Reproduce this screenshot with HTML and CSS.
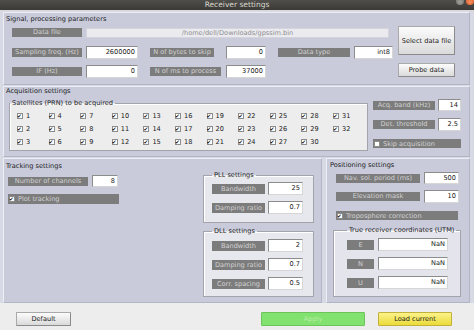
FILE: index.html
```html
<!DOCTYPE html>
<html>
<head>
<meta charset="utf-8">
<title>Receiver settings</title>
<link rel="stylesheet" href="styles.css">
</head>
<body>
<div class="win">
  <header class="titlebar">
    <span class="title">Receiver settings</span>
    <span class="wbtn wmin"></span>
    <span class="wbtn wclose"></span>
  </header>

  <main class="content">
    <section class="panel signal">
      <h2 class="ptitle">Signal, processing parameters</h2>
      <div class="sig-body">
        <div class="sig-rows">
          <div class="row r-file">
            <span class="lbl w70 h9">Data file</span>
            <span class="path">/home/dell/Downloads/gpssim.bin</span>
          </div>
          <div class="row r-sig">
            <span class="lbl w70">Sampling freq. (Hz)</span>
            <span class="inp w52 ml4">2600000</span>
            <span class="lbl w64 ml12">N of bytes to skip</span>
            <span class="inp w40 ml12">0</span>
            <span class="lbl w72 ml12">Data type</span>
            <span class="inp w39 ml4">int8</span>
          </div>
          <div class="row r-sig r-if">
            <span class="lbl w70">IF (Hz)</span>
            <span class="inp w52 ml4">0</span>
            <span class="lbl w71 ml12">N of ms to process</span>
            <span class="inp w40 ml5">37000</span>
          </div>
        </div>
        <div class="sig-btns">
          <button class="btn btn-select">Select data file</button>
          <button class="btn btn-probe">Probe data</button>
        </div>
      </div>
    </section>

    <section class="panel acq">
      <h2 class="ptitle">Acquisition settings</h2>
      <div class="acq-body">
        <fieldset class="group sats">
          <legend>Satellites (PRN) to be acquired</legend>
          <div class="sat-grid">
            <label class="chk"><span class="cb on"></span>1</label>
            <label class="chk"><span class="cb on"></span>2</label>
            <label class="chk"><span class="cb on"></span>3</label>
            <label class="chk"><span class="cb on"></span>4</label>
            <label class="chk"><span class="cb on"></span>5</label>
            <label class="chk"><span class="cb on"></span>6</label>
            <label class="chk"><span class="cb on"></span>7</label>
            <label class="chk"><span class="cb on"></span>8</label>
            <label class="chk"><span class="cb on"></span>9</label>
            <label class="chk"><span class="cb on"></span>10</label>
            <label class="chk"><span class="cb on"></span>11</label>
            <label class="chk"><span class="cb on"></span>12</label>
            <label class="chk"><span class="cb on"></span>13</label>
            <label class="chk"><span class="cb on"></span>14</label>
            <label class="chk"><span class="cb on"></span>15</label>
            <label class="chk"><span class="cb on"></span>16</label>
            <label class="chk"><span class="cb on"></span>17</label>
            <label class="chk"><span class="cb on"></span>18</label>
            <label class="chk"><span class="cb on"></span>19</label>
            <label class="chk"><span class="cb on"></span>20</label>
            <label class="chk"><span class="cb on"></span>21</label>
            <label class="chk"><span class="cb on"></span>22</label>
            <label class="chk"><span class="cb on"></span>23</label>
            <label class="chk"><span class="cb on"></span>24</label>
            <label class="chk"><span class="cb on"></span>25</label>
            <label class="chk"><span class="cb on"></span>26</label>
            <label class="chk"><span class="cb on"></span>27</label>
            <label class="chk"><span class="cb on"></span>28</label>
            <label class="chk"><span class="cb on"></span>29</label>
            <label class="chk"><span class="cb on"></span>30</label>
            <label class="chk"><span class="cb on"></span>31</label>
            <label class="chk"><span class="cb on"></span>32</label>
          </div>
        </fieldset>
        <div class="acq-side">
          <div class="row r-acq">
            <span class="lbl w62">Acq. band (kHz)</span>
            <span class="inp w23 ml3">14</span>
          </div>
          <div class="row r-acq r-det">
            <span class="lbl w62">Det. threshold</span>
            <span class="inp w23 ml3">2.5</span>
          </div>
          <label class="cbar skip"><span class="cb"></span>Skip acquisition</label>
        </div>
      </div>
    </section>

    <div class="lower">
      <section class="panel track">
        <h2 class="ptitle">Tracking settings</h2>
        <div class="track-body">
          <div class="track-left">
            <div class="row r-chan">
              <span class="lbl w80">Number of channels</span>
              <span class="inp w26 ml4">8</span>
            </div>
            <label class="cbar plot"><span class="cb on"></span>Plot tracking</label>
          </div>
          <div class="track-right">
            <fieldset class="group loop pll">
              <legend>PLL settings</legend>
              <div class="row r-loop">
                <span class="lbl w53 h10">Bandwidth</span>
                <span class="inp w35 ml3">25</span>
              </div>
              <div class="row r-loop">
                <span class="lbl w53 h10">Damping ratio</span>
                <span class="inp w35 ml3">0.7</span>
              </div>
            </fieldset>
            <fieldset class="group loop dll">
              <legend>DLL settings</legend>
              <div class="row r-loop">
                <span class="lbl w53 h10">Bandwidth</span>
                <span class="inp w35 ml3">2</span>
              </div>
              <div class="row r-loop">
                <span class="lbl w53 h10">Damping ratio</span>
                <span class="inp w35 ml3">0.7</span>
              </div>
              <div class="row r-loop">
                <span class="lbl w53 h10">Corr. spacing</span>
                <span class="inp w35 ml3">0.5</span>
              </div>
            </fieldset>
          </div>
        </div>
      </section>

      <section class="panel pos">
        <h2 class="ptitle">Positioning settings</h2>
        <div class="row r-pos">
          <span class="lbl w84">Nav. sol. period (ms)</span>
          <span class="inp w35 ml4">500</span>
        </div>
        <div class="row r-pos r-elev">
          <span class="lbl w84">Elevation mask</span>
          <span class="inp w35 ml4">10</span>
        </div>
        <label class="cbar tropo"><span class="cb on"></span>Troposphere correction</label>
        <fieldset class="group utm">
          <legend>True receiver coordinates (UTM)</legend>
          <div class="row r-utm">
            <span class="lbl w27 h10">E</span>
            <span class="inp w70 ml4">NaN</span>
          </div>
          <div class="row r-utm">
            <span class="lbl w27 h10">N</span>
            <span class="inp w70 ml4">NaN</span>
          </div>
          <div class="row r-utm">
            <span class="lbl w27 h10">U</span>
            <span class="inp w70 ml4">NaN</span>
          </div>
        </fieldset>
      </section>
    </div>
  </main>

  <footer class="footer">
    <button class="btn btn-default">Default</button>
    <button class="btn btn-apply">Apply</button>
    <button class="btn btn-load">Load current</button>
  </footer>
</div>
</body>
</html>
```

FILE: styles.css
```css
* { box-sizing: border-box; margin: 0; padding: 0; }

html, body { width: 474px; height: 330px; overflow: hidden; }

body {
  font-family: "DejaVu Sans", "Liberation Sans", sans-serif;
  font-size: 6.6px;
  line-height: 8px;
  color: #1e1e1e;
  background: #ececec;
}

.win { display: flex; flex-direction: column; height: 330px; }

/* ---------- title bar ---------- */
.titlebar {
  position: relative;
  height: 11px;
  background: linear-gradient(#4f4e4a, #3b3a36);
  border-bottom: 1px solid #d9d9d9;
  display: flex;
  justify-content: center;
  align-items: flex-start;
}
.title {
  font-size: 7.5px;
  line-height: 9px;
  color: #d8d5cc;
}
.wbtn {
  position: absolute;
  top: -3px;
  width: 8px;
  height: 8px;
  border-radius: 50%;
}
.wmin { left: 456px; background: radial-gradient(circle at 50% 60%, #a3a29d, #6a6964); }
.wclose { left: 466px; background: radial-gradient(circle at 50% 60%, #f7955f, #d9491f); }

/* ---------- content ---------- */
.content {
  flex: 1;
  background: #d7d9e4;
  padding: 1px 4px 0 3px;
  display: flex;
  flex-direction: column;
  gap: 1px;
}

.panel {
  background: #c9cbdb;
  border: 1px solid #eceef4;
  border-right-color: #b3b5c6;
  border-bottom-color: #b3b5c6;
}

.ptitle {
  font-size: 6.6px;
  font-weight: normal;
  line-height: 8px;
  color: #1c1c1c;
  padding-left: 2px;
}

.row { display: flex; align-items: center; }

/* gray labels */
.lbl {
  display: block;
  height: 9px;
  line-height: 9px;
  background: #7c7c7c;
  color: #d2d2d2;
  text-align: center;
  white-space: nowrap;
  overflow: hidden;
}
.h9 { height: 9px; line-height: 9px; }
.h10 { height: 10px; line-height: 10px; }

/* edit fields */
.inp {
  display: block;
  height: 13px;
  line-height: 11px;
  background: #ffffff;
  border: 1px solid;
  border-color: #8c8c8c #d6d6d6 #d6d6d6 #8c8c8c;
  text-align: right;
  padding-right: 2px;
  color: #202020;
  white-space: nowrap;
}

/* widths / spacing */
.w23 { width: 23px; } .w26 { width: 26px; } .w27 { width: 27px; }
.w35 { width: 35px; } .w39 { width: 39px; } .w40 { width: 40px; }
.w52 { width: 52px; } .w53 { width: 53px; } .w62 { width: 62px; }
.w64 { width: 64px; } .w70 { width: 70px; } .w71 { width: 71px; }
.w72 { width: 72px; } .w80 { width: 80px; } .w84 { width: 84px; }
.ml3 { margin-left: 3px; } .ml4 { margin-left: 4px; } .ml5 { margin-left: 5px; }
.ml12 { margin-left: 12px; }

/* ---------- signal panel ---------- */
.signal { height: 73px; }
.signal .ptitle { margin-top: 2px; }
.sig-body { display: flex; margin-top: 3px; }
.sig-rows { margin-left: 8px; padding-top: 2px; }
.r-file { height: 10px; align-items: flex-start; }
.path {
  display: block;
  width: 303px;
  height: 10px;
  line-height: 9px;
  margin-left: 4px;
  background: #ebebef;
  border: 1px solid #d3d4dc;
  color: #8e8e92;
  text-align: center;
}
.r-sig { margin-top: 8px; height: 13px; }
.r-if { margin-top: 6px; }
.sig-btns {
  margin-left: auto;
  margin-right: 14px;
  width: 57px;
  display: flex;
  flex-direction: column;
}

/* buttons */
.btn {
  font-family: inherit;
  font-size: 6.6px;
  line-height: 8px;
  color: #1a1a1a;
  border: 1px solid #a9a9a9;
  border-right-color: #8a8a8a;
  border-bottom-color: #8a8a8a;
  border-radius: 1px;
  background: linear-gradient(#fcfcfc, #dadada);
  display: flex;
  align-items: center;
  justify-content: center;
}
.btn-select { height: 29px; }
.btn-probe { height: 14px; margin-top: 8px; }

/* ---------- acquisition ---------- */
.acq { height: 71px; }
.acq-body { display: flex; align-items: flex-start; }

.group {
  border: 1px solid #a2a3ab;
  box-shadow: inset 1px 1px 0 #ffffff;
  padding: 0;
  min-width: 0;
}
.group legend {
  padding: 0 2px;
  font-size: 6.6px;
  line-height: 8px;
  color: #1c1c1c;
}

.sats {
  width: 359px;
  height: 52px;
  margin: 4px 0 0 5px;
  background: #ededee;
}
.sat-grid {
  display: grid;
  grid-auto-flow: column;
  grid-template-rows: repeat(3, 13.3px);
  grid-auto-columns: 31.6px;
  margin: 2px 0 0 7px;
}
.chk {
  display: flex;
  align-items: center;
  gap: 3px;
  color: #222;
}
.cb {
  position: relative;
  flex: none;
  width: 6px;
  height: 6px;
  background: #ffffff;
  border: 1px solid #8d8d8d;
}
.cb.on::after {
  content: "\2714";
  position: absolute;
  left: -1px;
  top: -2px;
  font-size: 5.5px;
  line-height: 8px;
  color: #111;
}

.acq-side { margin: 4px 0 0 5px; width: 88px; }
.r-acq { height: 12px; }
.r-acq .inp { height: 12px; line-height: 10px; }
.r-det { margin-top: 7px; height: 13px; }
.r-det .inp { height: 13px; line-height: 11px; }

.cbar {
  display: flex;
  align-items: center;
  gap: 3px;
  height: 9px;
  background: #7c7c7c;
  color: #d2d2d2;
  padding-left: 1px;
  white-space: nowrap;
}
.skip { margin-top: 8px; width: 88px; }

/* ---------- lower panels ---------- */
.lower { display: flex; gap: 4px; height: 145px; }
.track { width: 319px; }
.pos { flex: 1; }
.track .ptitle { margin-top: 3px; }
.track-body { display: flex; align-items: flex-start; }
.track-left { margin: 5px 0 0 4px; width: 111px; }
.r-chan { height: 12px; }
.r-chan .inp { height: 12px; line-height: 10px; }
.plot { margin-top: 7px; width: 111px; height: 10px; }
.track-right {
  margin: 1px 7px 0 auto;
  width: 111px;
  display: flex;
  flex-direction: column;
  gap: 4px;
}
.loop { background: #e7e8ee; padding: 0 0 0 8px; }
.pll { height: 52px; }
.dll { height: 70px; }
.r-loop { height: 13px; margin-top: 6px; }
.loop legend + .r-loop { margin-top: 3px; }
.dll legend + .r-loop { margin-top: 4px; }

.pos .ptitle { margin-top: 2px; padding-left: 3px; }
.r-pos { height: 12px; margin: 3px 0 0 9px; }
.r-pos .inp { height: 12px; line-height: 10px; }
.r-elev { margin-top: 6px; height: 13px; }
.r-elev .inp { height: 13px; line-height: 11px; }
.tropo { margin: 8px 0 0 9px; width: 122px; }
.utm {
  width: 128px;
  height: 71px;
  margin: 6px 0 0 6px;
  background: #e4e5ec;
  padding: 0 0 0 13px;
}
.r-utm { height: 13px; margin-top: 6px; }
.utm legend + .r-utm { margin-top: 4px; }

/* ---------- footer ---------- */
.footer {
  height: 27px;
  background: #ededed;
  display: flex;
  align-items: flex-start;
  padding-top: 9px;
}
.footer .btn { height: 14px; }
.btn-default { width: 55px; margin-left: 16px; }
.btn-apply {
  width: 104px;
  margin-left: auto;
  background: #82e26f;
  border-color: #6cc45a;
  color: #b9ecaa;
}
.btn-load {
  width: 74px;
  margin: 0 22px 0 13px;
  background: linear-gradient(#fbf38a, #ebdb3a);
  border-color: #c2b23a;
}
```
